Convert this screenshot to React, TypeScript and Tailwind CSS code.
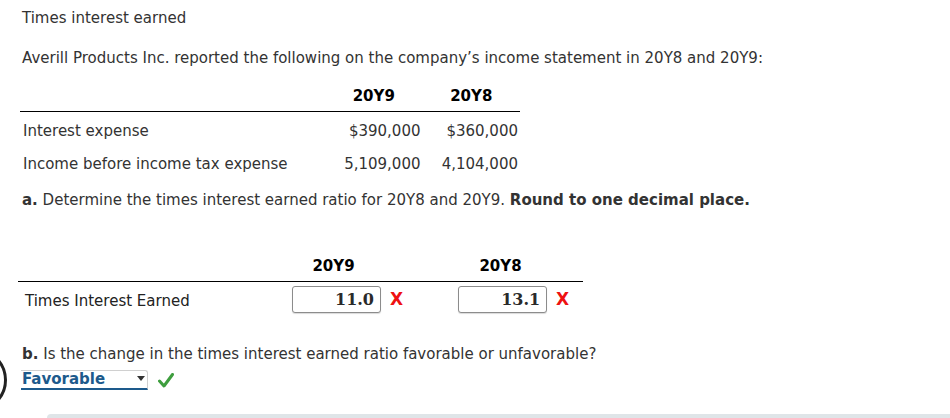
import React from "react";

function RedX() {
  return (
    <span
      className="ml-[9px] text-[17px] font-bold text-[#ee1111] leading-none"
      style={{ fontFamily: '"DejaVu Sans", Verdana, sans-serif' }}
    >
      X
    </span>
  );
}

function NumInput({ value }: { value: string }) {
  return (
    <div
      className="w-[89px] h-[27px] border border-[#8c8c8c] rounded-[3px] bg-white flex items-center justify-end pr-[6px] text-[16px] font-bold text-[#2a2a2a] shadow-[0_1px_1px_rgba(0,0,0,0.15)]"
      style={{ fontFamily: '"DejaVu Serif", Georgia, serif' }}
    >
      {value}
    </div>
  );
}

export default function App() {
  const sans = { fontFamily: '"DejaVu Sans", Verdana, sans-serif' };
  return (
    <div className="relative w-[950px] h-[418px] bg-white overflow-hidden text-[#333] text-[15px]" style={sans}>
      {/* circle at left edge */}
      <div className="absolute left-[-57px] top-[348px] w-[64px] h-[64px] rounded-full border-[3px] border-[#222]" />
      <div className="pl-[22px] pt-[8px]">
        <div className="leading-[20px]">Times interest earned</div>
        <div className="mt-[20px] leading-[20px]">
          Averill Products Inc. reported the following on the company’s income statement in 20Y8 and 20Y9:
        </div>
        <table className="mt-[16px] -ml-[2px] border-collapse w-[500px]">
          <thead>
            <tr className="border-b border-black">
              <th className="w-[305px]"></th>
              <th className="text-center font-bold text-black h-[27px] pb-[3px]">20Y9</th>
              <th className="text-center font-bold text-black pb-[3px]">20Y8</th>
            </tr>
          </thead>
          <tbody>
            <tr className="h-[36px]">
              <td className="pl-[3px] pt-[3px]">Interest expense</td>
              <td className="text-right pr-[2px] pt-[3px]">$390,000</td>
              <td className="text-right pr-[2px] pt-[3px]">$360,000</td>
            </tr>
            <tr className="h-[34px]">
              <td className="pl-[3px]">Income before income tax expense</td>
              <td className="text-right pr-[2px]">5,109,000</td>
              <td className="text-right pr-[2px]">4,104,000</td>
            </tr>
          </tbody>
        </table>
        <div className="mt-[9px] leading-[20px]">
          <b>a.</b> Determine the times interest earned ratio for 20Y8 and 20Y9. <b>Round to one decimal place.</b>
        </div>

        {/* table 2 */}
        <div className="mt-[41px] -ml-[4px] w-[565px]">
          <div className="flex h-[31px] items-center border-b border-black">
            <div className="w-[271px]" />
            <div className="w-[89px] text-center font-bold text-black">20Y9</div>
            <div className="w-[78px]" />
            <div className="w-[89px] text-center font-bold text-black">20Y8</div>
          </div>
          <div className="flex items-center mt-[4px] h-[27px]">
            <div className="w-[274px] pl-[7px] pt-[3px] text-[#222]">Times Interest Earned</div>
            <NumInput value="11.0" />
            <RedX />
            <div className="w-[55px]" />
            <NumInput value="13.1" />
            <RedX />
          </div>
        </div>

        <div className="mt-[31px] leading-[20px]">
          <b>b.</b> Is the change in the times interest earned ratio favorable or unfavorable?
        </div>
        <div className="flex items-center mt-[6px]">
          <div className="relative w-[126px] h-[17px] -ml-[1px] border-t border-r border-[#d0d0d0] rounded-tr-[3px] border-b-2 border-b-[#1d5a8c] box-content">
            <span className="absolute left-[1px] top-[-2px] text-[15px] font-bold text-[#1d5a8c] leading-[20px]">Favorable</span>
            <svg className="absolute right-[2px] top-[5px]" width="8" height="6" viewBox="0 0 8 6">
              <path d="M0 0 L8 0 L4 5 Z" fill="#333" />
            </svg>
          </div>
          <svg className="ml-[10px]" width="16" height="15" viewBox="0 0 16 15">
            <path d="M1.5 8 L6 13 L14.5 1.5" fill="none" stroke="#3e9e3e" strokeWidth="3" strokeLinecap="round" strokeLinejoin="round" />
          </svg>
        </div>
      </div>
      <div className="absolute left-[47px] right-0 top-[414px] h-[6px] bg-[#dfe5e8] rounded-tl-[4px]" />
    </div>
  );
}
